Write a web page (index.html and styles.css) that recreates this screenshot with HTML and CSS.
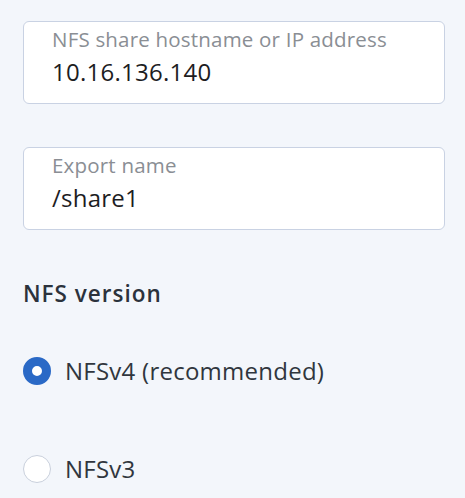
FILE: index.html
```html
<!DOCTYPE html>
<html lang="en">
<head>
<meta charset="utf-8">
<title>NFS share</title>
<link rel="stylesheet" href="styles.css">
</head>
<body>
<div class="form">
  <div class="field">
    <div class="field-label">NFS share hostname or IP address</div>
    <div class="field-value">10.16.136.140</div>
  </div>
  <div class="field field-second">
    <div class="field-label">Export name</div>
    <div class="field-value">/share1</div>
  </div>
  <div class="section-title">NFS version</div>
  <div class="radio-group">
    <div class="radio-row">
      <span class="radio radio-checked"></span>
      <span class="radio-text">NFSv4 (recommended)</span>
    </div>
    <div class="radio-row">
      <span class="radio"></span>
      <span class="radio-text">NFSv3</span>
    </div>
  </div>
</div>
</body>
</html>
```
FILE: styles.css
```css
html, body {
  margin: 0;
  padding: 0;
}
body {
  background: #f3f6fb;
  font-family: "Open Sans", "Noto Sans", sans-serif;
  width: 465px;
  height: 498px;
  overflow: hidden;
}
.form {
  padding: 21px 20px 0 23px;
  display: flex;
  flex-direction: column;
}
.field {
  box-sizing: border-box;
  height: 83px;
  background: #ffffff;
  border: 1px solid #c9d2e3;
  border-radius: 6px;
  padding: 5px 28px 0;
}
.field-second {
  margin-top: 43px;
}
.field-label {
  font-size: 20.5px;
  line-height: 24px;
  letter-spacing: 0.2px;
  color: #8a8e94;
}
.field-value {
  margin-top: 7px;
  font-size: 24px;
  line-height: 28px;
  letter-spacing: 0.25px;
  color: #1d1d1f;
}
.section-title {
  margin-top: 49px;
  font-size: 22.5px;
  line-height: 30px;
  font-weight: 600;
  letter-spacing: 1px;
  color: #2b323c;
}
.radio-group {
  margin-top: 48px;
  display: flex;
  flex-direction: column;
  gap: 70px;
}
.radio-row {
  display: flex;
  align-items: center;
  gap: 14px;
  height: 28px;
}
.radio {
  box-sizing: border-box;
  width: 28px;
  height: 28px;
  border-radius: 50%;
  border: 1px solid #c9d0dc;
  background: #ffffff;
  flex: none;
}
.radio-checked {
  border: 9px solid #2a69c6;
  background: #ffffff;
}
.radio-text {
  font-size: 24px;
  line-height: 28px;
  letter-spacing: 0.25px;
  color: #30363e;
}
```
